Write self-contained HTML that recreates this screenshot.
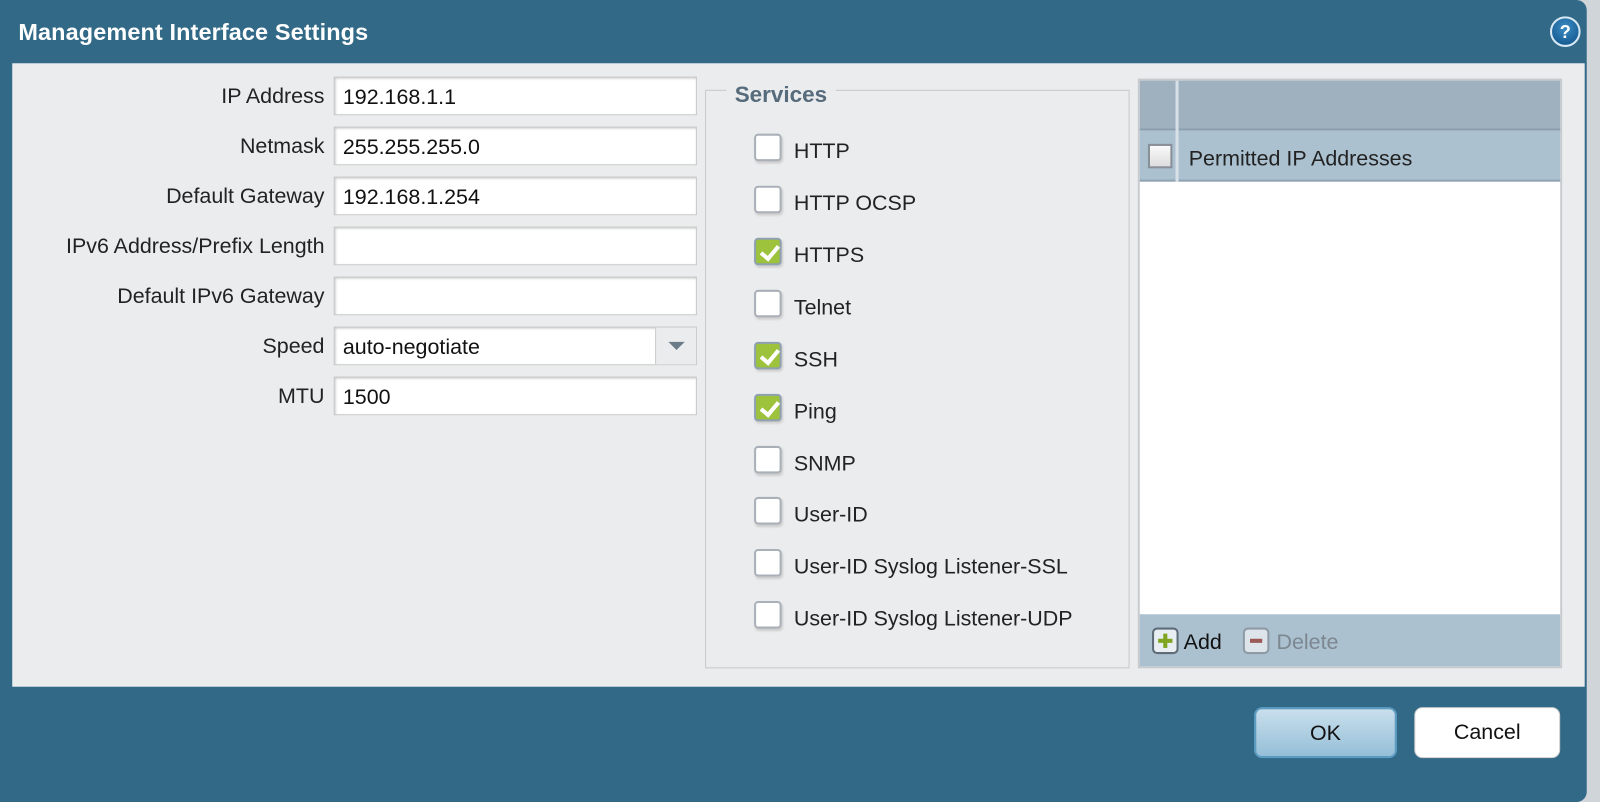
<!DOCTYPE html>
<html><head><style>
*{box-sizing:border-box;margin:0;padding:0}
body{width:1600px;height:786px;background:#d0d5da;font-family:"Liberation Sans",sans-serif;position:relative;overflow:hidden}
#w{position:absolute;left:0;top:0;width:1568px;height:770px;transform:scale(1.0204);transform-origin:0 0}
.dlg{position:absolute;left:0;top:0;width:1555px;height:786px;background:#316987;border-radius:0 10px 10px 0}
.title{position:absolute;left:18px;top:18px;color:#fff;font-weight:bold;font-size:23px;letter-spacing:0.1px}
.help{position:absolute;left:1519px;top:16px;width:30px;height:30px;border-radius:50%;background:radial-gradient(circle at 50% 35%,#3b8cc4,#0d4f85);border:2px solid #d8e8f4;color:#fff;font-weight:bold;font-size:18px;text-align:center;line-height:26px}
.body{position:absolute;left:12px;top:62px;width:1541px;height:611px;background:#ebecee}
.lbl{position:absolute;right:1250px;font-size:21px;color:#222;text-align:right;white-space:nowrap}
.inp{position:absolute;left:327px;width:356px;height:38px;background:#fff;border:1px solid #c9c9c9;box-shadow:inset 1px 1px 2px #ccc;font-size:21px;padding:8px 8px;color:#111}
.fs{position:absolute;left:691px;top:88px;width:416px;height:567px;border:1px solid #c8c8c8}
.legend{position:absolute;left:712px;top:80px;background:#ebecee;padding:0 8px;font-weight:bold;font-size:22px;color:#566b7b}
.cb{position:absolute;left:739px;width:27px;height:27px;border:2px solid #a9b0b8;border-radius:4px;background:#fff;box-shadow:1px 2px 2px #ccc}
.cb.on{background:#9dc23b;border-color:#8fa0b0}
.cb.on:after{content:"";position:absolute;left:8px;top:2px;width:7px;height:14px;border:solid #fff;border-width:0 4px 4px 0;transform:rotate(40deg)}
.ct{position:absolute;left:778px;font-size:21px;color:#222}
.grid{position:absolute;left:1115px;top:77px;width:416px;height:578px;background:#fff;border:2px solid #c8cbce}
.btn{position:absolute;top:693px;height:50px;border-radius:8px;font-size:21px;text-align:center;line-height:48px;color:#111}
</style></head><body><div id="w">
<div class="dlg"></div>
<div class="title">Management Interface Settings</div>
<div class="help">?</div>
<div class="body"></div>

<div class="lbl" style="top:83px">IP Address</div><div class="inp" style="top:75px">192.168.1.1</div>
<div class="lbl" style="top:132px">Netmask</div><div class="inp" style="top:124px">255.255.255.0</div>
<div class="lbl" style="top:181px">Default Gateway</div><div class="inp" style="top:173px">192.168.1.254</div>
<div class="lbl" style="top:230px">IPv6 Address/Prefix Length</div><div class="inp" style="top:222px"></div>
<div class="lbl" style="top:279px">Default IPv6 Gateway</div><div class="inp" style="top:271px"></div>
<div class="lbl" style="top:328px">Speed</div><div class="inp" style="top:320px">auto-negotiate<div style="position:absolute;right:0;top:0;width:40px;height:36px;background:#ebecee;border-left:1px solid #ccc"><div style="position:absolute;left:12px;top:14px;border-left:8px solid transparent;border-right:8px solid transparent;border-top:8px solid #6b7b88"></div></div></div>
<div class="lbl" style="top:377px">MTU</div><div class="inp" style="top:369px">1500</div>

<div class="fs"></div>
<div class="legend">Services</div>
<div class="cb" style="top:131px"></div><div class="ct" style="top:137px">HTTP</div>
<div class="cb" style="top:182px"></div><div class="ct" style="top:188px">HTTP OCSP</div>
<div class="cb on" style="top:233px"></div><div class="ct" style="top:239px">HTTPS</div>
<div class="cb" style="top:284px"></div><div class="ct" style="top:290px">Telnet</div>
<div class="cb on" style="top:335px"></div><div class="ct" style="top:341px">SSH</div>
<div class="cb on" style="top:386px"></div><div class="ct" style="top:392px">Ping</div>
<div class="cb" style="top:437px"></div><div class="ct" style="top:443px">SNMP</div>
<div class="cb" style="top:487px"></div><div class="ct" style="top:493px">User-ID</div>
<div class="cb" style="top:538px"></div><div class="ct" style="top:544px">User-ID Syslog Listener-SSL</div>
<div class="cb" style="top:589px"></div><div class="ct" style="top:595px">User-ID Syslog Listener-UDP</div>

<div class="grid">
 <div style="position:absolute;left:0;top:0;width:412px;height:49px;background:#9fb1bf;border-bottom:2px solid #8a9eae"></div>
 <div style="position:absolute;left:0;top:49px;width:412px;height:50px;background:#abc1d0;border-bottom:2px solid #8fa3b2"></div>
 <div style="position:absolute;left:35px;top:0;width:3px;height:99px;background:#d7e0e7"></div>
 <div style="position:absolute;left:8px;top:62px;width:24px;height:24px;border:2px solid #8a9098;background:linear-gradient(#fafafa,#ddd)"></div>
 <div style="position:absolute;left:48px;top:65px;font-size:21px;color:#222">Permitted IP Addresses</div>
 <div style="position:absolute;left:0;top:523px;width:412px;height:51px;background:#abc1d0"></div>
 <div style="position:absolute;left:12px;top:536px;width:26px;height:26px;border:2px solid #5e6c78;border-radius:5px;background:#e8eef2"><div style="position:absolute;left:4px;top:9px;width:14px;height:4px;background:#7fa520"></div><div style="position:absolute;left:9px;top:4px;width:4px;height:14px;background:#7fa520"></div></div>
 <div style="position:absolute;left:43px;top:539px;font-size:21px;color:#111">Add</div>
 <div style="position:absolute;left:101px;top:536px;width:26px;height:26px;border:2px solid #8e9aa4;border-radius:5px;background:#dde4ea"><div style="position:absolute;left:5px;top:9px;width:12px;height:4px;background:#9b5a55"></div></div>
 <div style="position:absolute;left:134px;top:539px;font-size:21px;color:#7d8790">Delete</div>
</div>

<div class="btn" style="left:1229px;width:140px;background:linear-gradient(#c9dfec,#95bfd8);border:2px solid #5d9dc3">OK</div>
<div class="btn" style="left:1386px;width:143px;background:#fff;border:1px solid #ccc">Cancel</div>
</div></body></html>
